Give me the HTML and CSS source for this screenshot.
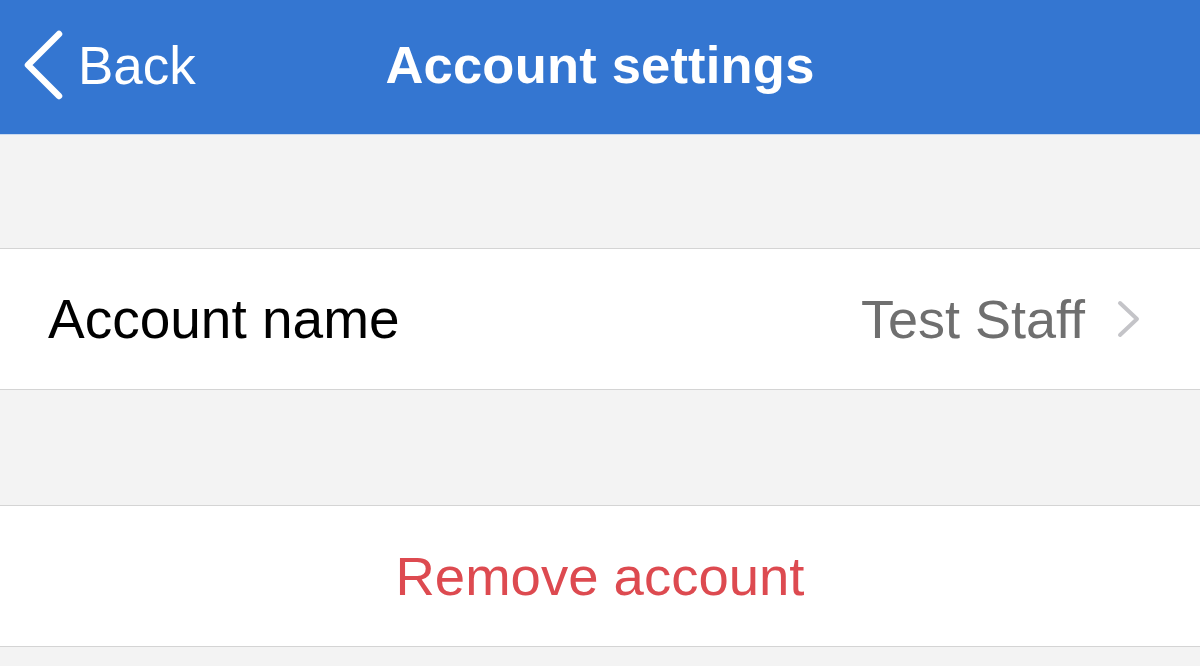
FILE: index.html
```html
<!DOCTYPE html>
<html>
<head>
<meta charset="utf-8">
<link rel="stylesheet" href="styles.css">
</head>
<body>
<header class="navbar">
  <div class="nav-left">
    <svg class="back-icon" width="44" height="72" viewBox="0 0 44 72">
      <polyline points="37,5 6,36 37,67" fill="none" stroke="#ffffff" stroke-width="6.5" stroke-linecap="round" stroke-linejoin="round"/>
    </svg>
    <span class="back-text">Back</span>
  </div>
  <div class="nav-title">Account settings</div>
  <div class="nav-right"></div>
</header>
<main class="content">
  <section class="group group-first">
    <div class="cell">
      <span class="cell-label">Account name</span>
      <span class="cell-detail">
        <span class="cell-value">Test Staff</span>
        <svg class="chevron" width="28" height="38" viewBox="0 0 28 38">
          <polyline points="5,3 22,19 5,35" fill="none" stroke="#c4c4c8" stroke-width="4" stroke-linecap="round" stroke-linejoin="round"/>
        </svg>
      </span>
    </div>
  </section>
  <section class="group group-second">
    <div class="cell cell-center">
      <span class="danger">Remove account</span>
    </div>
  </section>
</main>
</body>
</html>
```

FILE: styles.css
```css
html, body {
  margin: 0;
  padding: 0;
}
body {
  background: #f3f3f3;
  font-family: "Liberation Sans", Arial, Helvetica, sans-serif;
  width: 1200px;
  height: 666px;
  overflow: hidden;
}
.navbar {
  height: 135px;
  background: #3476d1;
  display: grid;
  grid-template-columns: 1fr auto 1fr;
  align-items: center;
  color: #ffffff;
  padding-bottom: 4px;
  box-sizing: border-box;
  border-bottom: 1px solid #c9d9ef;
}
.nav-left {
  display: flex;
  align-items: center;
  padding-left: 22px;
}
.back-icon {
  display: block;
  margin-right: 12px;
}
.back-text {
  font-size: 53px;
  line-height: 1;
}
.nav-title {
  font-size: 52.5px;
  font-weight: bold;
  line-height: 1;
  letter-spacing: 0.2px;
}
.content {
  display: flex;
  flex-direction: column;
}
.group {
  background: #ffffff;
  border-top: 1px solid #d4d4d4;
  border-bottom: 1px solid #d4d4d4;
}
.group-first {
  margin-top: 113px;
}
.group-second {
  margin-top: 115px;
}
.cell {
  height: 140px;
  display: flex;
  align-items: center;
  justify-content: space-between;
  padding: 0 57px 0 48px;
}
.cell-label {
  font-size: 55px;
  color: #000000;
}
.cell-detail {
  display: flex;
  align-items: center;
}
.cell-value {
  font-size: 54px;
  color: #6f6f6f;
}
.chevron {
  display: block;
  margin-left: 30px;
}
.cell-center {
  justify-content: center;
  padding: 0;
}
.danger {
  font-size: 54.5px;
  color: #dd4a50;
}
```
